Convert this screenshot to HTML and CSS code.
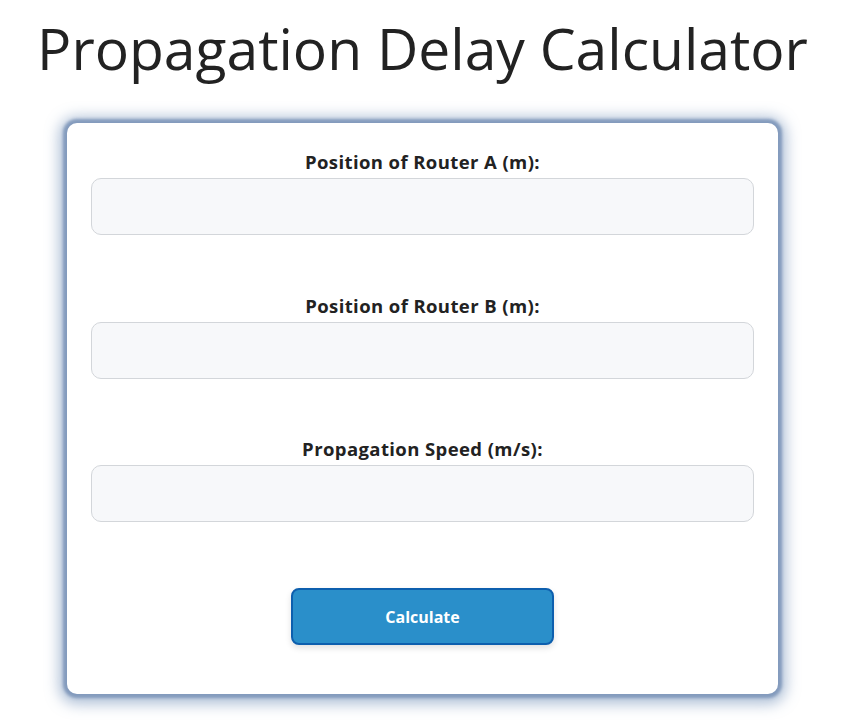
FILE: index.html
```html
<!DOCTYPE html>
<html lang="en">
<head>
<meta charset="utf-8">
<title>Propagation Delay Calculator</title>
<link rel="stylesheet" href="styles.css">
</head>
<body>
<div class="page">
  <h1 class="title">Propagation Delay Calculator</h1>
  <div class="card">
    <div class="group">
      <label class="label" for="a">Position of Router A (m):</label>
      <input class="field" id="a" type="text">
    </div>
    <div class="group">
      <label class="label" for="b">Position of Router B (m):</label>
      <input class="field" id="b" type="text">
    </div>
    <div class="group">
      <label class="label" for="s">Propagation Speed (m/s):</label>
      <input class="field" id="s" type="text">
    </div>
    <div class="actions">
      <button class="btn" type="button">Calculate</button>
    </div>
  </div>
</div>
</body>
</html>
```

FILE: styles.css
```css
* { box-sizing: border-box; }
html, body { margin: 0; padding: 0; background: #ffffff; }
body {
  font-family: "Open Sans", "Noto Sans", sans-serif;
  color: #222222;
}
.page {
  width: 845px;
  display: flex;
  flex-direction: column;
  align-items: center;
  padding-bottom: 30px;
}
.title {
  margin: 13px 0 0 0;
  font-weight: 400;
  font-size: 57px;
  line-height: 70px;
  text-align: center;
  color: #222222;
}
.card {
  margin-top: 40px;
  width: 711px;
  height: 571px;
  flex-shrink: 0;
  background: #ffffff;
  border-radius: 10px;
  box-shadow: 0 0 3px 4px rgba(125, 150, 185, 0.9), 0 2px 14px 8px rgba(95, 130, 175, 0.5);
  padding: 27px 24px 0 24px;
  display: flex;
  flex-direction: column;
}
.group {
  display: flex;
  flex-direction: column;
  align-items: stretch;
  margin-bottom: 58.5px;
}
.label {
  display: block;
  text-align: center;
  font-weight: 700;
  font-size: 18.5px;
  letter-spacing: 0.4px;
  line-height: 24px;
  margin-bottom: 4px;
  color: #222222;
}
.field {
  height: 57px;
  width: 100%;
  background: #f7f8fa;
  border: 1px solid #d3d6da;
  border-radius: 10px;
  font-family: inherit;
  font-size: 16px;
  padding: 0 14px;
  outline: none;
}
.actions {
  display: flex;
  justify-content: center;
  margin-top: 7.5px;
}
.btn {
  width: 263px;
  height: 57px;
  background: #2a8fca;
  border: 2px solid #0d5fae;
  border-radius: 8px;
  color: #ffffff;
  font-family: inherit;
  font-weight: 700;
  font-size: 16px;
  box-shadow: 0 3px 6px rgba(0, 0, 0, 0.12);
  cursor: pointer;
}
```
